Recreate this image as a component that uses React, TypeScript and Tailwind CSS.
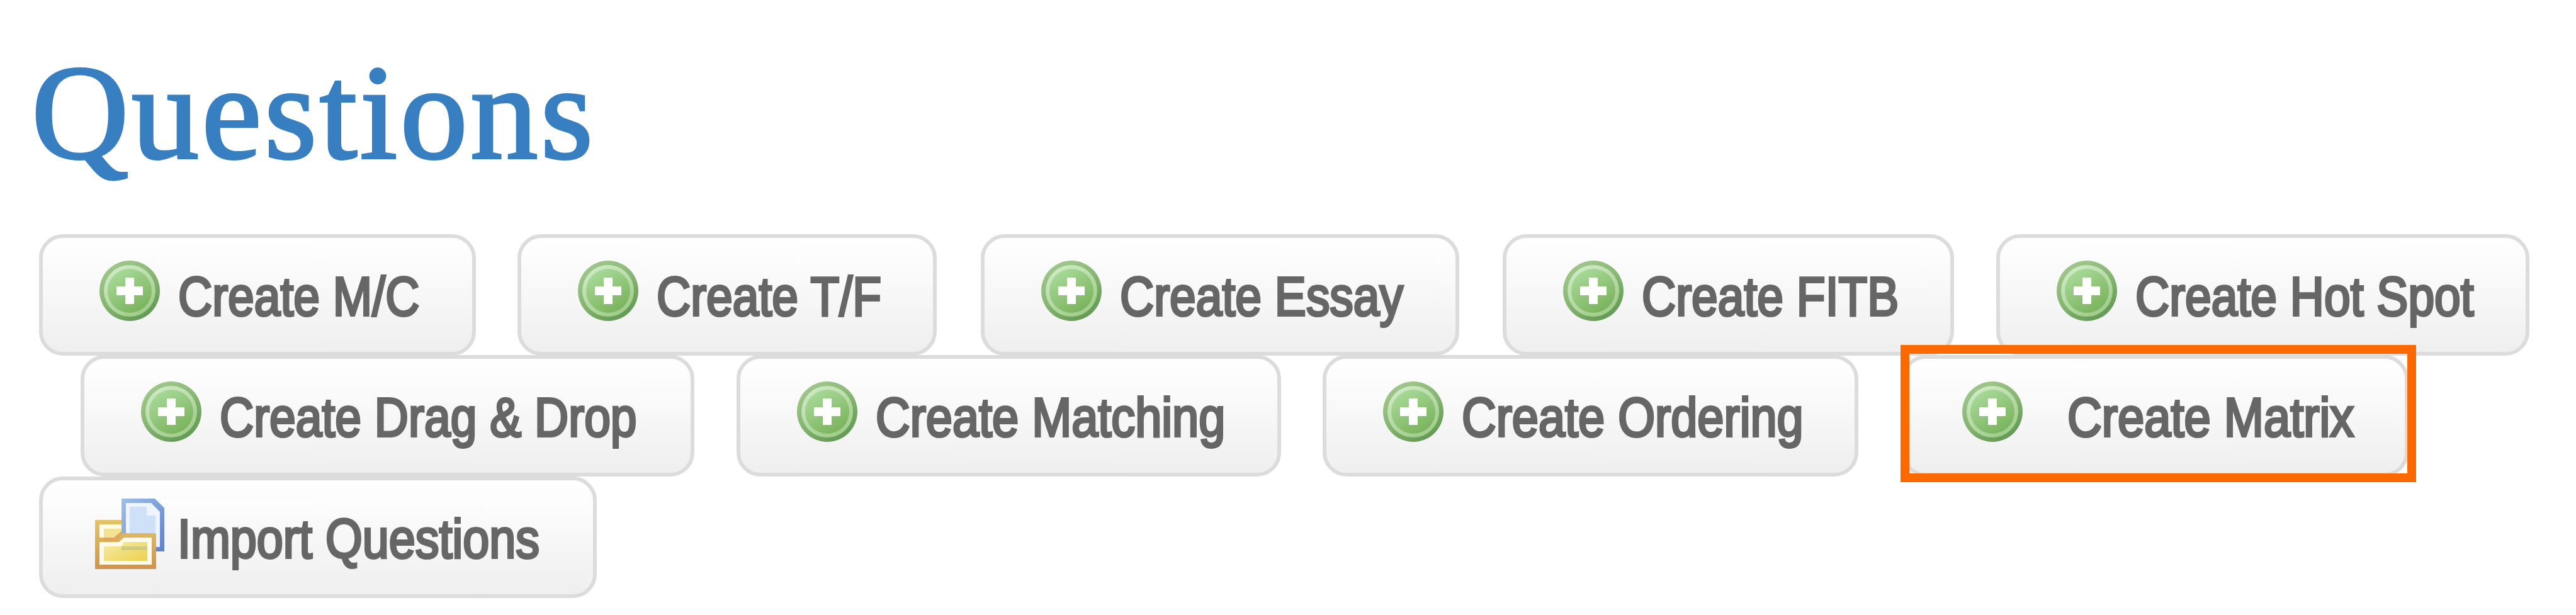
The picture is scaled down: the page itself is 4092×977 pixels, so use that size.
import { useId } from "react";

interface ActionProps {
  label: string;
  className: string;
  textClass?: string;
  icon?: "add" | "import";
}

function AddIcon() {
  const id = useId();
  return (
    <svg className="w-[98px] h-[98px] shrink-0" viewBox="0 0 98 98">
      <defs>
        <linearGradient id={id + "rim"} x1="0.2" y1="0" x2="0.8" y2="1">
          <stop offset="0" stopColor="#a3c98f" />
          <stop offset="0.5" stopColor="#86b571" />
          <stop offset="1" stopColor="#5f9651" />
        </linearGradient>
        <linearGradient id={id + "ring"} x1="0.2" y1="0" x2="0.8" y2="1">
          <stop offset="0" stopColor="#d0ebc6" />
          <stop offset="1" stopColor="#9ccb86" />
        </linearGradient>
        <linearGradient id={id + "face"} x1="0.2" y1="0" x2="0.8" y2="1">
          <stop offset="0" stopColor="#aadb9c" />
          <stop offset="1" stopColor="#77b158" />
        </linearGradient>
      </defs>
      <circle cx="49" cy="49" r="48" fill={`url(#${id}rim)`} />
      <circle cx="49" cy="49" r="41" fill={`url(#${id}ring)`} />
      <circle cx="49" cy="49" r="35" fill={`url(#${id}face)`} />
      <path d="M42 28h14v14h14v14H56v14H42V56H28V42h14z" fill="#fff" />
    </svg>
  );
}

function ImportIcon() {
  return (
    <svg className="w-[110px] h-[112px] shrink-0" viewBox="0 0 110 112">
      <defs>
        <linearGradient id="page" x1="0" y1="0" x2="1" y2="1">
          <stop offset="0" stopColor="#9dc0e8" />
          <stop offset="1" stopColor="#5f80cc" />
        </linearGradient>
        <linearGradient id="folder" x1="0" y1="0" x2="0" y2="1">
          <stop offset="0" stopColor="#e2c566" />
          <stop offset="1" stopColor="#d3924a" />
        </linearGradient>
        <linearGradient id="fill" x1="0" y1="0" x2="1" y2="1">
          <stop offset="0" stopColor="#f6eda6" />
          <stop offset="1" stopColor="#ecd04e" />
        </linearGradient>
      </defs>
      <path d="M42 0h53l15 15v69H42z" fill="url(#page)" />
      <path d="M49 7h40l14 14v56H49z" fill="#eef5ff" />
      <path d="M55 13h27v14h14v44H55z" fill="#cfe1f9" />
      {/* folder back, front lip and inner fill */}
      <path d="M0 34h42v21h55v57H0z" fill="url(#folder)" />
      <path d="M7 41h35v14l-6 7H7z" fill="#fffbe8" />
      <path d="M14 48h28v9l-8 11H14z" fill="#dda75c" />
      <path d="M14 48h28v4l-12 10H14z" fill="#f3e291" />
      <path d="M7 69h31l8-7h44v43H7z" fill="#fffbe8" />
      <path d="M14 76h28l4-7h37v30H14z" fill="url(#fill)" />
      <path d="M42 76h41v6H42z" fill="#d2ca7c" />
    </svg>
  );
}

function ActionButton({ label, className, textClass = "ml-[28px] scale-x-[0.852]", icon = "add" }: ActionProps) {
  return (
    <button
      className={`flex items-start h-[193px] shrink-0 rounded-[38px] border-[6px] border-[#dcdcdc] bg-linear-to-b from-white to-[#efefef] whitespace-nowrap ${className}`}
    >
      <span className={icon === "add" ? "flex shrink-0 mt-[35px] ml-[89px]" : "flex shrink-0 mt-[29px] ml-[83px]"}>
        {icon === "add" ? <AddIcon /> : <ImportIcon />}
      </span>
      <span
        className={`mt-[41px] shrink-0 origin-left leading-[104px] text-[88px] text-[#666] [-webkit-text-stroke:4px_#666] font-['Liberation_Sans',sans-serif] ${textClass}`}
      >
        {label}
      </span>
    </button>
  );
}

export default function App() {
  return (
    <main className="w-[4092px] h-[977px] bg-white overflow-hidden">
      <h1 className="h-[372px] pl-[50px] pt-[54px] text-[214px] leading-[250px] tracking-[4.5px] text-[#377fc0] [-webkit-text-stroke:4px_#377fc0] font-['Liberation_Serif',serif]">
        Questions
      </h1>

      <div className="flex h-[192px] pl-[62px]">
        <ActionButton label="Create M/C" className="w-[694px]" />
        <ActionButton label="Create T/F" className="w-[666px] ml-[66px]" />
        <ActionButton label="Create Essay" className="w-[760px] ml-[70px]" />
        <ActionButton label="Create FITB" className="w-[717px] ml-[69px]" />
        <ActionButton label="Create Hot Spot" className="w-[847px] ml-[67px]" />
      </div>

      <div className="flex h-[193px] pl-[128px]">
        <ActionButton label="Create Drag & Drop" className="w-[975px]" />
        <ActionButton label="Create Matching" className="w-[865px] ml-[67px]" textClass="ml-[28px] scale-x-[0.86]" />
        <ActionButton label="Create Ordering" className="w-[851px] ml-[66px]" textClass="ml-[28px] scale-x-[0.86]" />
        <div className="relative ml-[69px]">
          <ActionButton label="Create Matrix" className="w-[805px]" textClass="ml-[70px] scale-x-[0.862]" />
          {/* Highlight frame around the matrix action */}
          <div className="absolute -left-[2px] -top-[16px] w-[819px] h-[218px] border-[14px] border-[#fb6900]" />
        </div>
      </div>

      <div className="flex pl-[62px]">
        <ActionButton
          label="Import Questions"
          icon="import"
          className="w-[886px]"
          textClass="ml-[21px] scale-x-[0.858]"
        />
      </div>
    </main>
  );
}
